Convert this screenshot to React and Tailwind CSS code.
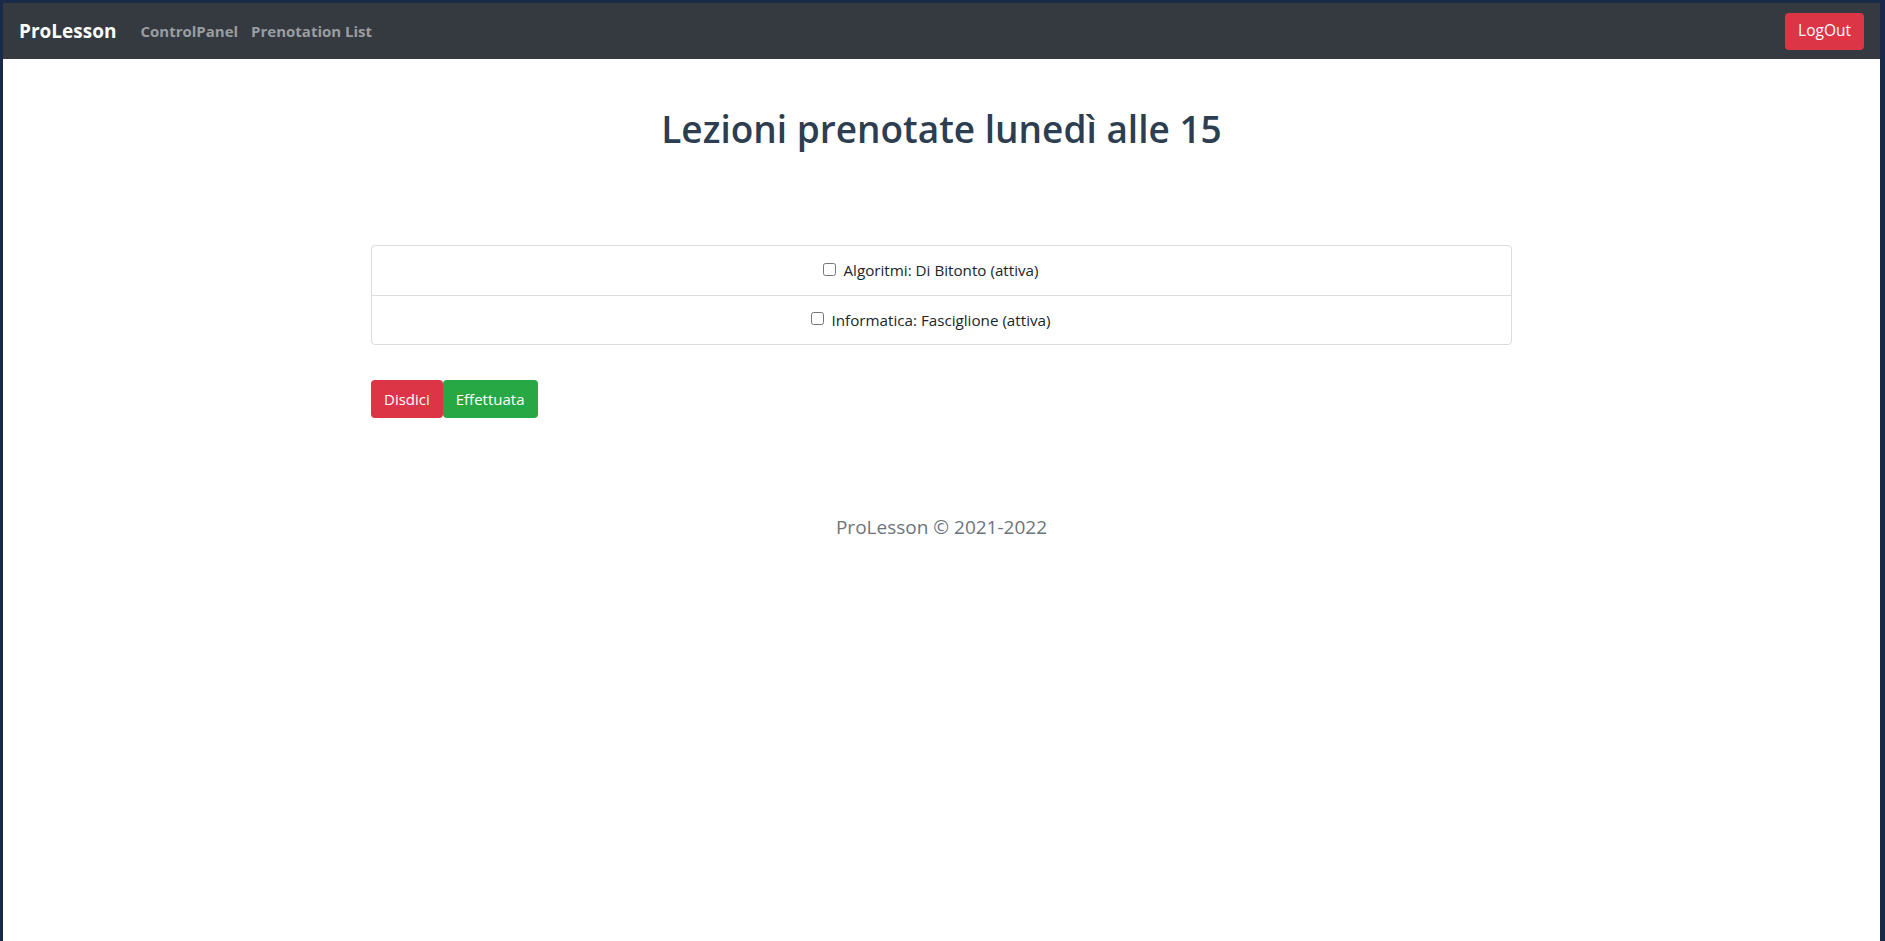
import { useState } from 'react';

const lessons = [
  { id: 1, text: 'Algoritmi: Di Bitonto (attiva)' },
  { id: 2, text: 'Informatica: Fasciglione (attiva)' },
];

export default function App() {
  const [checked, setChecked] = useState({});

  return (
    <div className="min-h-[941px] bg-[#1a2947] pl-[3px] pt-[3px] pr-[5px] font-['Open_Sans',sans-serif]">
      <div className="min-h-[938px] bg-white">
        {/* navbar */}
        <nav className="h-[56px] bg-[#343a40] flex items-center justify-between pl-[16px] pr-[16px]">
          <div className="flex items-center">
            <span className="text-white font-bold text-[19px] mr-[24px]">ProLesson</span>
            <a className="text-[#9a9da0] font-bold text-[15px] mr-[13px]">ControlPanel</a>
            <a className="text-[#9a9da0] font-bold text-[15px]">Prenotation List</a>
          </div>
          <button className="h-[37px] px-[13px] bg-[#dc3545] text-white text-[15.5px] rounded-[4px]">LogOut</button>
        </nav>

        <h1 className="text-center text-[#2c3e50] text-[37px] font-semibold leading-[48px] mt-[46px]">Lezioni prenotate lunedì alle 15</h1>

        <div className="w-[1141px] mx-auto mt-[92px]">
          <ul className="border border-[#dcdcdc] rounded-[4px]">
            {lessons.map((l, i) => (
              <li key={l.id} className={`h-[49px] flex items-center justify-center pr-[22px] text-[15.2px] text-[#212529] ${i > 0 ? 'border-t border-[#dcdcdc]' : ''}`}>
                <input
                  type="checkbox"
                  className="w-[13px] h-[13px] mr-[8px] -mt-[3px]"
                  checked={!!checked[l.id]}
                  onChange={() => setChecked({ ...checked, [l.id]: !checked[l.id] })}
                />
                {l.text}
              </li>
            ))}
          </ul>

          <div className="flex mt-[35px]">
            <button className="h-[38px] px-[13px] bg-[#dc3545] text-white text-[15px] rounded-[4px]">Disdici</button>
            <button className="h-[38px] px-[13px] bg-[#28a745] text-white text-[15px] rounded-[4px]">Effettuata</button>
          </div>
        </div>

        <footer className="text-center text-[#6c757d] text-[19px] mt-[95px]">ProLesson © 2021-2022</footer>
      </div>
    </div>
  );
}
